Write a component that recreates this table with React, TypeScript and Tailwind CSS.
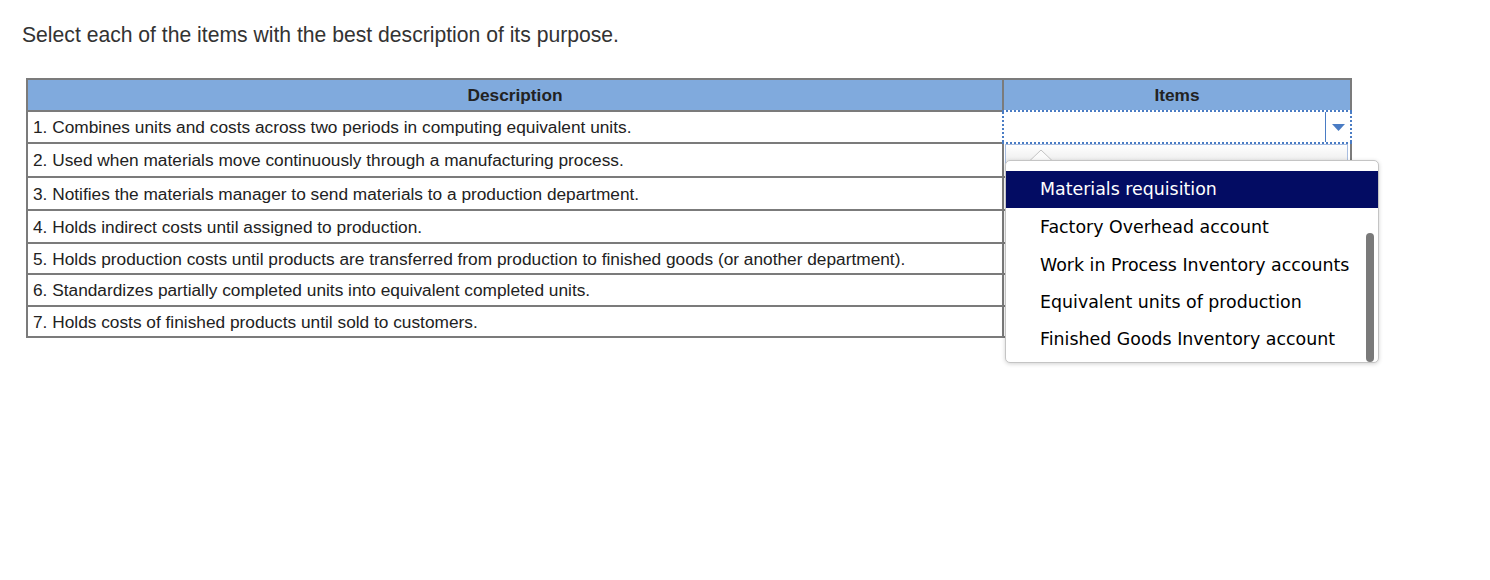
import React from "react";

const rows = [
  { text: "1. Combines units and costs across two periods in computing equivalent units.", h: "h-[30px]" },
  { text: "2. Used when materials move continuously through a manufacturing process.", h: "h-[32px]" },
  { text: "3. Notifies the materials manager to send materials to a production department.", h: "h-[31px]" },
  { text: "4. Holds indirect costs until assigned to production.", h: "h-[31px]" },
  { text: "5. Holds production costs until products are transferred from production to finished goods (or another department).", h: "h-[29px]" },
  { text: "6. Standardizes partially completed units into equivalent completed units.", h: "h-[30px]" },
  { text: "7. Holds costs of finished products until sold to customers.", h: "h-[29px]" },
];

const options = [
  { label: "Materials requisition", h: "h-[37px]" },
  { label: "Factory Overhead account", h: "h-[38px]" },
  { label: "Work in Process Inventory accounts", h: "h-[38px]" },
  { label: "Equivalent units of production", h: "h-[36px]" },
  { label: "Finished Goods Inventory account", h: "h-[38px]" },
];

// focused select in row 1: square-dotted outline spills over the cell borders
const FocusedSelect = () => {
  return (
    <div className="-m-[2px] flex h-[34px] bg-white p-[2px] [background-image:linear-gradient(90deg,#4a7cc4_50%,transparent_50%),linear-gradient(90deg,#4a7cc4_50%,transparent_50%),linear-gradient(0deg,#4a7cc4_50%,transparent_50%),linear-gradient(0deg,#4a7cc4_50%,transparent_50%)] [background-repeat:repeat-x,repeat-x,repeat-y,repeat-y] [background-size:4px_2px,4px_2px,2px_4px,2px_4px] [background-position:0_0,0_100%,0_0,100%_0]">
      <div className="flex-1" />
      <div className="flex w-[25px] items-center justify-center border-l border-[#4a7cc4] pl-[1px]">
        <svg width="13" height="7" viewBox="0 0 13 7">
          <path d="M0 0 H13 L6.5 7 Z" fill="#4a7cc4" />
        </svg>
      </div>
    </div>
  );
};

const OpenSelect = () => {
  return (
    <div className="flex h-full items-start pl-[1px] pr-[2px]">
      <svg className="mt-[3px] shrink-0" width="6" height="8" viewBox="0 0 6 8">
        <path d="M0 0 L6 4 L0 8 Z" fill="#4a7cc4" />
      </svg>
      <div className="-ml-[6px] h-[20px] flex-1 border border-[#a8bde0] bg-gradient-to-b from-white to-[#ececec]" />
    </div>
  );
};

const Dropdown = () => {
  return (
    <div className="absolute left-[977px] top-[69px] w-[374px]">
      <svg className="ml-[25px] block" width="24" height="12" viewBox="0 0 24 12">
        <path d="M0 11.5 L11 1 L22 11.5" fill="#fbfbfb" stroke="#c4c4c4" strokeWidth="1" />
      </svg>
      <div className="relative -mt-px h-[203px] overflow-hidden rounded-[5px] border border-[#c4c4c4] bg-white pt-[10px] shadow-[0_1px_4px_rgba(0,0,0,0.18)] font-['DejaVu_Sans',Verdana,sans-serif] text-[17.4px] text-black">
        {options.map((o, i) => (
          <div
            key={o.label}
            className={`${o.h} flex items-center pl-[34px] ${i === 0 ? "bg-[#030c63] text-white" : ""}`}
          >
            {o.label}
          </div>
        ))}
        <div className="absolute right-[4px] top-[72px] h-[129px] w-[8px] rounded-full bg-[#7a7a7a]" />
      </div>
    </div>
  );
};

export default function App() {
  return (
    <div className="min-h-[580px] w-full bg-white px-[22px] pt-[22px] font-['Liberation_Sans',Arial,sans-serif] text-[#222]">
      <p className="text-[21.15px] leading-[26px] text-[#333]">
        Select each of the items with the best description of its purpose.
      </p>

      <div className="relative ml-[4px] mt-[30px] w-[1326px] border-2 border-[#7b7b7b] text-[17.3px]">
        <div className="grid grid-cols-[976px_346px] border-b-2 border-[#7b7b7b] bg-[#80aadd]">
          <div className="flex h-[30px] items-center justify-center border-r-2 border-[#7b7b7b] pt-[2px] font-bold">
            Description
          </div>
          <div className="flex h-[30px] items-center justify-center pt-[2px] font-bold">Items</div>
        </div>

        {rows.map((r, i) => (
          <div
            key={i}
            className={`grid grid-cols-[976px_346px] ${i < rows.length - 1 ? "border-b-2 border-[#7b7b7b]" : ""}`}
          >
            <div className={`${r.h} flex items-center border-r-2 border-[#7b7b7b] pl-[5px] pt-[2px] whitespace-nowrap`}>
              {r.text}
            </div>
            <div className={r.h}>
              {i === 0 && <FocusedSelect />}
              {i === 1 && <OpenSelect />}
            </div>
          </div>
        ))}

        <Dropdown />
      </div>
    </div>
  );
}
